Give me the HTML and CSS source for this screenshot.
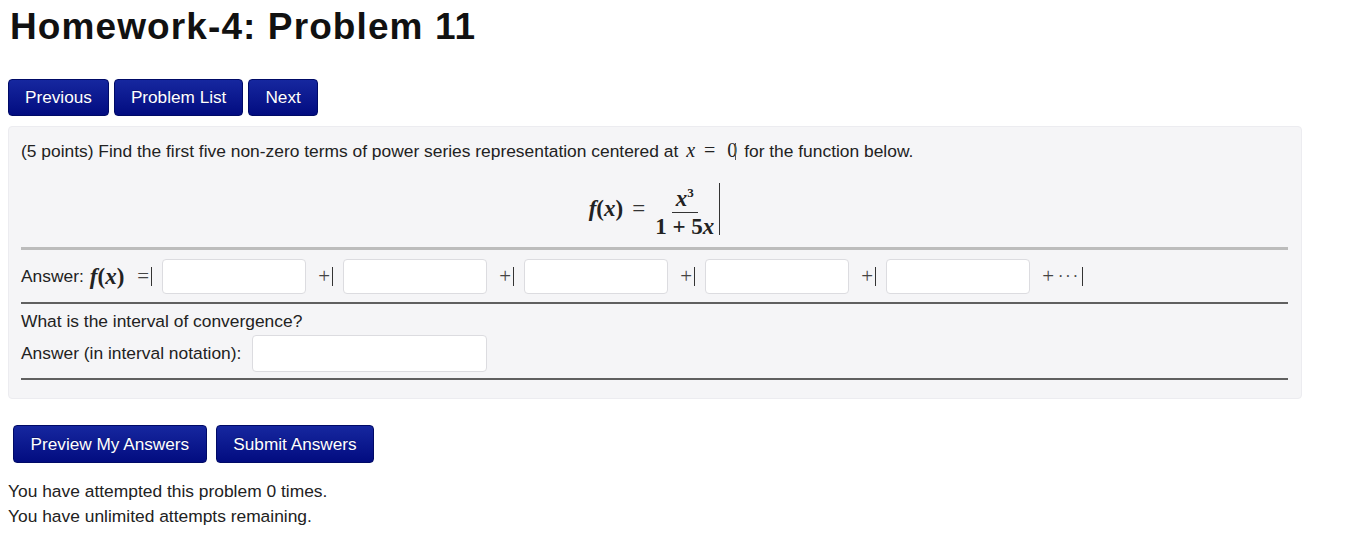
FILE: index.html
```html
<!DOCTYPE html>
<html>
<head>
<meta charset="utf-8">
<title>Homework-4: Problem 11</title>
<link rel="stylesheet" href="styles.css">
</head>
<body>
<h1 class="title">Homework-4: Problem 11</h1>
<nav class="nav">
  <a class="btn">Previous</a>
  <a class="btn">Problem List</a>
  <a class="btn">Next</a>
</nav>
<div class="panel">
  <p class="question">(5 points) Find the first five non-zero terms of power series representation centered at <span class="mi">x</span><span class="mo">=</span><span class="mn">0</span><span class="caret-sm"></span> for the function below.</p>
  <div class="display">
    <span class="mb"><i>f</i>(<i>x</i>)</span>
    <span class="mb eq">=</span>
    <span class="frac">
      <span class="num"><i>x</i><sup>3</sup></span>
      <span class="den">1 + 5<i>x</i></span>
    </span>
    <span class="caret-lg"></span>
  </div>
  <hr class="rule-light">
  <div class="answer-row">
    <span class="lbl">Answer:</span>
    <span class="mb fx"><i>f</i>(<i>x</i>)</span>
    <span class="opfirst">=<span class="caret"></span></span>
    <input class="ans" type="text">
    <span class="op">+<span class="caret"></span></span>
    <input class="ans" type="text">
    <span class="op">+<span class="caret"></span></span>
    <input class="ans" type="text">
    <span class="op">+<span class="caret"></span></span>
    <input class="ans" type="text">
    <span class="op">+<span class="caret"></span></span>
    <input class="ans" type="text">
    <span class="op tail">+<span class="dots">&middot;&middot;&middot;</span><span class="caret"></span></span>
  </div>
  <hr class="rule-dark">
  <p class="sub">What is the interval of convergence?</p>
  <div class="interval-row">
    <span class="lbl">Answer (in interval notation):</span>
    <input class="ans wide" type="text">
  </div>
  <hr class="rule-dark last">
</div>
<div class="actions">
  <a class="btn big">Preview My Answers</a>
  <a class="btn big">Submit Answers</a>
</div>
<p class="attempts">You have attempted this problem 0 times.<br>You have unlimited attempts remaining.</p>
</body>
</html>
```

FILE: styles.css
```css
body {
  margin: 8px;
  font-family: "Liberation Sans", Arial, sans-serif;
  font-size: 17.4px;
  color: #222;
  background: #fff;
}

.title {
  margin: 0 0 33px 2px;
  font-size: 37px;
  line-height: 38px;
  letter-spacing: 1.1px;
  font-weight: bold;
  color: #111;
}

.nav {
  display: flex;
  gap: 5px;
}

.btn {
  display: inline-flex;
  align-items: center;
  justify-content: center;
  height: 37px;
  padding: 0 16px;
  box-sizing: border-box;
  font-size: 17.2px;
  color: #fff;
  text-shadow: 0 -1px 0 rgba(0, 0, 0, 0.25);
  background: linear-gradient(to bottom, #16279f, #020c80);
  border: 1px solid #000a66;
  border-radius: 4px;
  cursor: pointer;
}

.panel {
  margin: 10px 48px 0 0;
  padding: 11px 13px 18px 12px;
  background: #f5f5f7;
  border: 1px solid #ececf0;
  border-radius: 4px;
}

.question,
.sub {
  margin: 0;
  line-height: 25px;
}

.mi, .mn, .mo {
  font-family: "Liberation Serif", "Times New Roman", serif;
  font-size: 20px;
}
.mi { font-style: italic; margin-left: 3px; }
.mo { margin: 0 12px 0 9px; }
.caret-sm {
  display: inline-block;
  width: 1px;
  height: 17px;
  margin-left: -2px;
  margin-right: 3px;
  background: #555;
  vertical-align: -3px;
}

.display {
  display: flex;
  justify-content: center;
  align-items: center;
  height: 72px;
  margin-top: 9px;
}

.mb {
  font-family: "Liberation Serif", "Times New Roman", serif;
  font-size: 23px;
  font-weight: bold;
}
.mb i { font-style: italic; }
.display .eq { margin: 0 8px 0 9px; font-weight: normal; color: #333; }

.frac {
  display: inline-flex;
  flex-direction: column;
  align-items: center;
  font-family: "Liberation Serif", "Times New Roman", serif;
  font-size: 23px;
  font-weight: bold;
}
.frac .num {
  padding: 0 4px 1px;
  line-height: 25px;
  border-bottom: 1px solid #333;
}
.frac .num sup { font-size: 13px; vertical-align: 9px; }
.frac .den {
  padding: 1px 2px 0;
  line-height: 25px;
}
.frac i { font-style: italic; }

.caret-lg {
  width: 1px;
  height: 52px;
  margin-left: 3px;
  background: #333;
}

hr {
  margin: 0;
  border: 0;
}
.rule-light {
  height: 3px;
  margin-top: 2px;
  background: #bcbcbc;
}
.rule-dark {
  height: 2px;
  background: #606060;
}
.rule-dark.last { margin-top: 6px; }

.answer-row {
  display: flex;
  align-items: center;
  height: 35px;
  margin: 9px 0 8px;
}

.lbl { margin-right: 6px; }
.fx { margin-right: 13px; }

.opfirst,
.op {
  display: inline-flex;
  align-items: center;
  font-family: "Liberation Serif", "Times New Roman", serif;
  font-size: 21px;
  color: #444;
}
.opfirst { margin-right: 10px; }
.op {
  box-sizing: border-box;
  width: 37px;
  padding-left: 12px;
}
.op.tail { width: auto; }
.dots { margin-left: 4px; letter-spacing: 2px; font-size: 16px; }

.caret {
  display: inline-block;
  width: 1px;
  height: 19px;
  margin-left: 2px;
  background: #333;
}

.ans {
  width: 144px;
  height: 35px;
  box-sizing: border-box;
  margin: 0;
  padding: 4px 6px;
  background: #fff;
  border: 1px solid #dcdce0;
  border-radius: 4px;
  font: inherit;
}
.ans.wide { width: 235px; height: 37px; }

.sub { margin-top: 5px; }

.interval-row {
  display: flex;
  align-items: center;
  margin-top: 1px;
}
.interval-row .lbl { margin-right: 11px; }

.actions {
  display: flex;
  gap: 9px;
  margin: 26px 0 0 5px;
}
.btn.big {
  height: 38px;
  padding: 0 16.6px;
}

.attempts {
  margin: 16px 0 0;
  line-height: 25px;
  color: #222;
}
```
